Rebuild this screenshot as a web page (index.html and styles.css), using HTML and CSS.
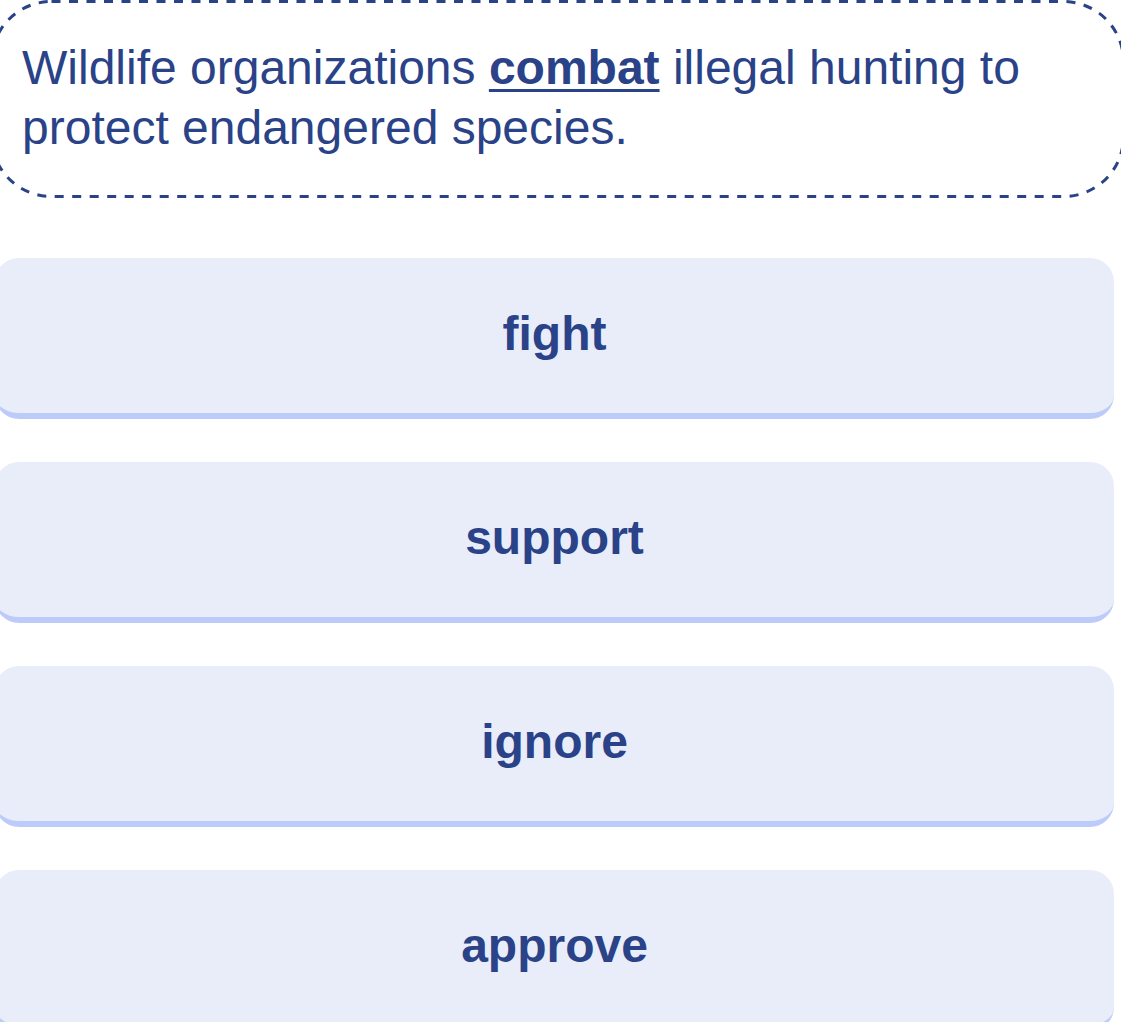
FILE: index.html
```html
<!DOCTYPE html>
<html lang="en">
<head>
<meta charset="utf-8">
<title>Quiz</title>
<link rel="stylesheet" href="styles.css">
</head>
<body>
<div class="quiz">
  <div class="prompt">
    <svg class="prompt-border" aria-hidden="true"><rect class="prompt-rect"></rect></svg>
    <p class="sentence">Wildlife organizations <span class="target">combat</span> illegal hunting to protect endangered species.</p>
  </div>
  <div class="options">
    <button class="option">fight</button>
    <button class="option">support</button>
    <button class="option">ignore</button>
    <button class="option">approve</button>
  </div>
</div>
</body>
</html>
```
FILE: styles.css
```css
html, body {
  margin: 0;
  padding: 0;
  background: #ffffff;
  overflow: hidden;
}

body {
  font-family: "Liberation Sans", Arial, sans-serif;
  color: #2a4287;
}

.quiz {
  margin-left: -5px;
  width: 1119px;
  display: flex;
  flex-direction: column;
}

.prompt {
  position: relative;
  margin-left: -5.5px;
  width: 1135px;
  box-sizing: border-box;
  padding: 38px 32px 40px 32.5px;
}

.prompt-border {
  position: absolute;
  left: 0;
  top: 0;
  width: 100%;
  height: 100%;
  overflow: visible;
  pointer-events: none;
}

.prompt-rect {
  x: 1.5px;
  y: 1.5px;
  width: calc(100% - 3px);
  height: calc(100% - 3px);
  rx: 60px;
  ry: 60px;
  fill: none;
  stroke: #2a4287;
  stroke-width: 3px;
  stroke-dasharray: 9 8.5;
}

.sentence {
  position: relative;
  margin: 0;
  font-size: 48px;
  line-height: 60px;
  color: #2a4287;
}

.target {
  font-weight: 700;
  text-decoration: underline;
  text-decoration-thickness: 3px;
  text-underline-offset: 5px;
}

.options {
  margin-top: 60px;
  display: flex;
  flex-direction: column;
  gap: 43px;
}

.option {
  display: flex;
  align-items: center;
  justify-content: center;
  height: 161px;
  box-sizing: border-box;
  width: 100%;
  border: none;
  border-bottom: 6px solid #bccbfa;
  border-radius: 24px;
  background: #e9edf9;
  font-family: "Liberation Sans", Arial, sans-serif;
  font-weight: 700;
  font-size: 48px;
  color: #2a4287;
  padding: 0 0 4px 0;
  margin: 0;
}
```
